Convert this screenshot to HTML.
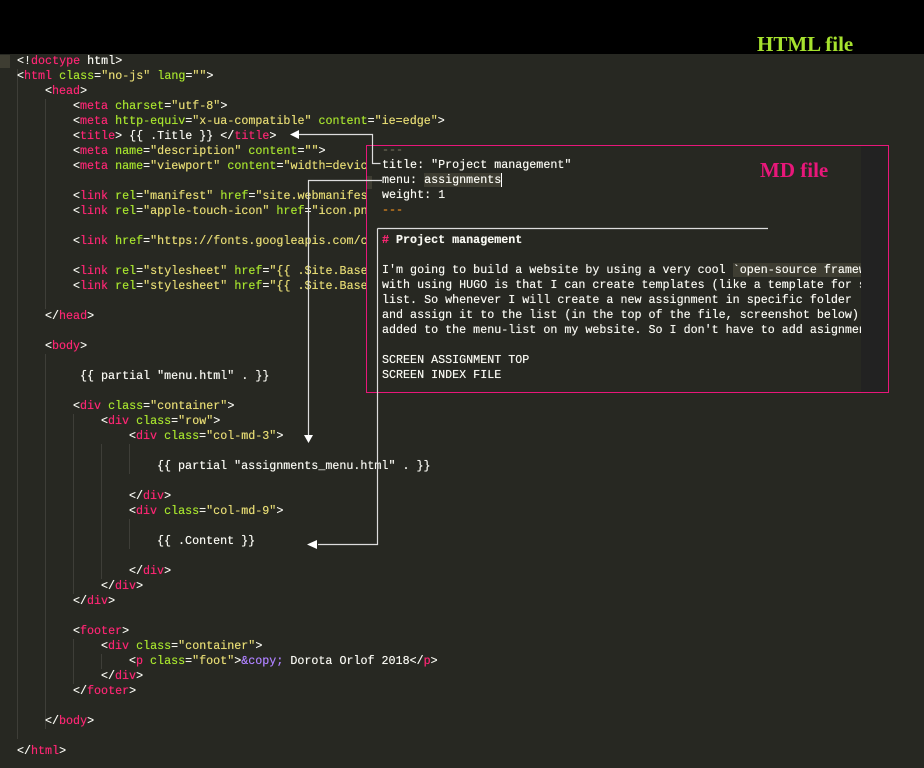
<!DOCTYPE html>
<html><head><meta charset="utf-8">
<style>
body{margin:0;width:924px;height:768px;background:#272822;position:relative;overflow:hidden;font-family:"Liberation Mono",monospace;font-size:11.7px;color:#f8f8f2}
#top{position:absolute;left:0;top:0;width:924px;height:54px;background:#000}
.l{position:absolute;height:15px;line-height:15px;white-space:pre;text-shadow:0 0 0.4px currentColor}
.t{color:#f92672}.a{color:#a6e22e}.s{color:#e6db74}.p{color:#ae81ff}
.g{position:absolute;width:1px;background:#3e3e38}
#md{position:absolute;left:366px;top:145px;width:521px;height:246px;border:1px solid #e8177a;background:#272822;overflow:hidden}
#md .l{left:15px}
#strip{position:absolute;left:494px;top:0;width:30px;height:246px;background:#222;z-index:2}
.hl{background:#3e3d32}
</style></head><body>
<div id="top"></div>
<div style="position:absolute;left:0;top:55px;width:10px;height:13px;background:#3e3d32"></div>
<div style="position:absolute;left:757px;top:32px;font-family:'Liberation Serif',serif;font-weight:bold;font-size:21px;color:#a6e22e">HTML file</div>
<div class="g" style="left:17px;top:69px;height:670px"></div>
<div class="g" style="left:45px;top:99px;height:210px"></div>
<div class="g" style="left:45px;top:354px;height:375px"></div>
<div class="g" style="left:73px;top:414px;height:180px"></div>
<div class="g" style="left:101px;top:444px;height:135px"></div>
<div class="g" style="left:129px;top:444px;height:30px"></div>
<div class="g" style="left:129px;top:519px;height:30px"></div>
<div class="g" style="left:73px;top:639px;height:45px"></div>
<div class="g" style="left:101px;top:654px;height:15px"></div>

<div class="l" style="left:17px;top:54px">&lt;!<span class="t">doctype</span> html&gt;</div>
<div class="l" style="left:17px;top:69px">&lt;<span class="t">html</span> <span class="a">class</span>=<span class="s">"no-js"</span> <span class="a">lang</span>=<span class="s">""</span>&gt;</div>
<div class="l" style="left:45px;top:84px">&lt;<span class="t">head</span>&gt;</div>
<div class="l" style="left:73px;top:99px">&lt;<span class="t">meta</span> <span class="a">charset</span>=<span class="s">"utf-8"</span>&gt;</div>
<div class="l" style="left:73px;top:114px">&lt;<span class="t">meta</span> <span class="a">http-equiv</span>=<span class="s">"x-ua-compatible"</span> <span class="a">content</span>=<span class="s">"ie=edge"</span>&gt;</div>
<div class="l" style="left:73px;top:129px">&lt;<span class="t">title</span>&gt; {{ .Title }} &lt;/<span class="t">title</span>&gt;</div>
<div class="l" style="left:73px;top:144px">&lt;<span class="t">meta</span> <span class="a">name</span>=<span class="s">"description"</span> <span class="a">content</span>=<span class="s">""</span>&gt;</div>
<div class="l" style="left:73px;top:159px">&lt;<span class="t">meta</span> <span class="a">name</span>=<span class="s">"viewport"</span> <span class="a">content</span>=<span class="s">"width=device-width</span></div>
<div class="l" style="left:73px;top:189px">&lt;<span class="t">link</span> <span class="a">rel</span>=<span class="s">"manifest"</span> <span class="a">href</span>=<span class="s">"site.webmanifest"</span></div>
<div class="l" style="left:73px;top:204px">&lt;<span class="t">link</span> <span class="a">rel</span>=<span class="s">"apple-touch-icon"</span> <span class="a">href</span>=<span class="s">"icon.png"</span></div>
<div class="l" style="left:73px;top:234px">&lt;<span class="t">link</span> <span class="a">href</span>=<span class="s">"https://fonts.googleapis.com/css</span></div>
<div class="l" style="left:73px;top:264px">&lt;<span class="t">link</span> <span class="a">rel</span>=<span class="s">"stylesheet"</span> <span class="a">href</span>=<span class="s">"{{ .$ite.BaseURL</span></div>
<div class="l" style="left:73px;top:279px">&lt;<span class="t">link</span> <span class="a">rel</span>=<span class="s">"stylesheet"</span> <span class="a">href</span>=<span class="s">"{{ .$ite.BaseURL</span></div>
<div class="l" style="left:45px;top:309px">&lt;/<span class="t">head</span>&gt;</div>
<div class="l" style="left:45px;top:339px">&lt;<span class="t">body</span>&gt;</div>
<div class="l" style="left:80px;top:369px">{{ partial "menu.html" . }}</div>
<div class="l" style="left:73px;top:399px">&lt;<span class="t">div</span> <span class="a">class</span>=<span class="s">"container"</span>&gt;</div>
<div class="l" style="left:101px;top:414px">&lt;<span class="t">div</span> <span class="a">class</span>=<span class="s">"row"</span>&gt;</div>
<div class="l" style="left:129px;top:429px">&lt;<span class="t">div</span> <span class="a">class</span>=<span class="s">"col-md-3"</span>&gt;</div>
<div class="l" style="left:157px;top:459px">{{ partial "assignments_menu.html" . }}</div>
<div class="l" style="left:129px;top:489px">&lt;/<span class="t">div</span>&gt;</div>
<div class="l" style="left:129px;top:504px">&lt;<span class="t">div</span> <span class="a">class</span>=<span class="s">"col-md-9"</span>&gt;</div>
<div class="l" style="left:157px;top:534px">{{ .Content }}</div>
<div class="l" style="left:129px;top:564px">&lt;/<span class="t">div</span>&gt;</div>
<div class="l" style="left:101px;top:579px">&lt;/<span class="t">div</span>&gt;</div>
<div class="l" style="left:73px;top:594px">&lt;/<span class="t">div</span>&gt;</div>
<div class="l" style="left:73px;top:624px">&lt;<span class="t">footer</span>&gt;</div>
<div class="l" style="left:101px;top:639px">&lt;<span class="t">div</span> <span class="a">class</span>=<span class="s">"container"</span>&gt;</div>
<div class="l" style="left:129px;top:654px">&lt;<span class="t">p</span> <span class="a">class</span>=<span class="s">"foot"</span>&gt;<span class="p">&amp;copy;</span> Dorota Orlof 2018&lt;/<span class="t">p</span>&gt;</div>
<div class="l" style="left:101px;top:669px">&lt;/<span class="t">div</span>&gt;</div>
<div class="l" style="left:73px;top:684px">&lt;/<span class="t">footer</span>&gt;</div>
<div class="l" style="left:45px;top:714px">&lt;/<span class="t">body</span>&gt;</div>
<div class="l" style="left:17px;top:744px">&lt;/<span class="t">html</span>&gt;</div>

<div id="md">
<div id="strip"></div>
<div style="position:absolute;left:393px;top:12px;font-family:'Liberation Serif',serif;font-weight:bold;font-size:21px;color:#e8177a">MD file</div>
<div style="position:absolute;left:0;top:30px;width:5px;height:13px;background:#3e3d32"></div>
<div class="l" style="top:-3px;color:#75715e">---</div>
<div class="l" style="top:12px">title: "Project management"</div>
<div class="l" style="top:27px">menu: <span class="hl">assignments</span><span style="border-left:1px solid #fff"></span></div>
<div class="l" style="top:42px">weight: 1</div>
<div class="l" style="top:57px;color:#fd971f">---</div>
<div class="l" style="top:87px;font-weight:bold"><span class="t">#</span> Project management</div>
<div class="l" style="top:117px">I'm going to build a website by using a very cool <span class="hl">`open-source framework</span></div>
<div class="l" style="top:132px">with using HUGO is that I can create templates (like a template for side</div>
<div class="l" style="top:147px">list. So whenever I will create a new assignment in specific folder</div>
<div class="l" style="top:162px">and assign it to the list (in the top of the file, screenshot below)</div>
<div class="l" style="top:177px">added to the menu-list on my website. So I don't have to add asignments</div>
<div class="l" style="top:207px">SCREEN ASSIGNMENT TOP</div>
<div class="l" style="top:222px">SCREEN INDEX FILE</div>
</div>

<svg width="924" height="768" style="position:absolute;left:0;top:0" fill="#fff">
<g stroke="#ddd" stroke-width="1.2" fill="none">
<path d="M380.5 163.5H372.5V134.5H298"/>
<path d="M382 180.5H308.5V436"/>
<path d="M377.5 228.5H768M377.5 228.5V544.5H318"/>
</g>
<path d="M290 134.5L299 130V139Z"/>
<path d="M308.5 443L304 435H313Z"/>
<path d="M307 544.5L317 540V549Z"/>
</svg>
</body></html>
